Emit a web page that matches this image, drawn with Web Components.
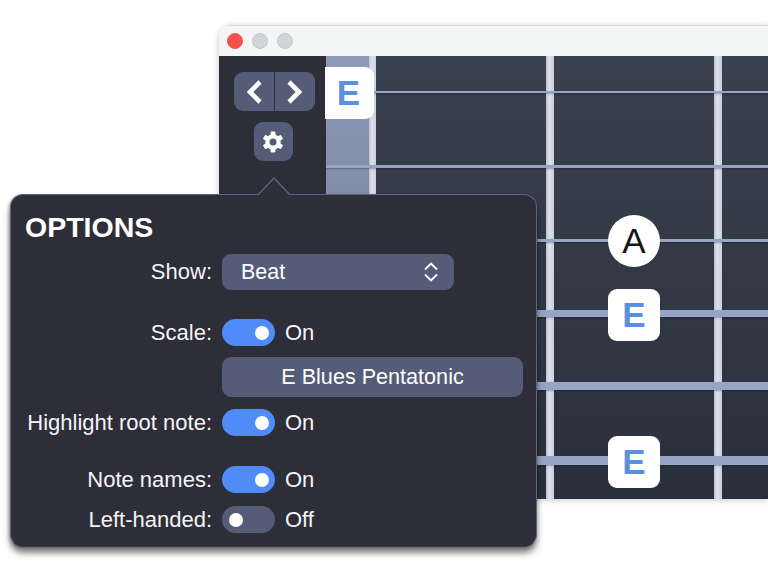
<!DOCTYPE html>
<html>
<head>
<meta charset="utf-8">
<style>
	html, body {
		margin: 0;
		background: #fff;
		overflow: hidden;
	}
	body {
		width: 768px;
		height: 569px;
		position: relative;
		font-family: "Liberation Sans", Arial, sans-serif;
	}
	#stage {
		padding-top: 25px;
	}
</style>
</head>
<body>
	<div id="stage">
	<fret-window>
		<side-bar slot="side"></side-bar>
		<fret-board slot="board">
			<fret-note kind="nut" style="--x: -1px; --y: 11px">E</fret-note>
			<fret-note kind="circle" style="--x: 282px; --y: 158.5px">A</fret-note>
			<fret-note kind="tile" style="--x: 282px; --y: 232.5px">E</fret-note>
			<fret-note kind="tile" style="--x: 282px; --y: 379.5px">E</fret-note>
		</fret-board>
	</fret-window>
	</div>

	<options-popover>
		<option-row label="Show:" style="margin-top: 10px">
			<option-select>Beat</option-select>
		</option-row>
		<option-row label="Scale:" style="margin-top: 29px">
			<option-toggle on></option-toggle>
		</option-row>
		<option-row style="margin-top: 11px">
			<option-button>E Blues Pentatonic</option-button>
		</option-row>
		<option-row label="Highlight root note:" style="margin-top: 12px">
			<option-toggle on></option-toggle>
		</option-row>
		<option-row label="Note names:" style="margin-top: 30px">
			<option-toggle on></option-toggle>
		</option-row>
		<option-row label="Left-handed:" style="margin-top: 13px">
			<option-toggle></option-toggle>
		</option-row>
	</options-popover>

<script>
class FretWindow extends HTMLElement {
	constructor() {
		super();
		this.attachShadow({ mode: "open" });
		this.shadowRoot.innerHTML = `
      <style>
        :host {
          display: block;
          width: 549px;
          height: 474px;
          margin-left: 219px;
          border-radius: 12px 0 0 0;
          box-shadow: 0 1px 6px rgba(0, 0, 0, .22);
          overflow: hidden;
        }
        #bar {
          height: 31px;
          box-sizing: border-box;
          background: #f4f5f5;
          border-top: 1px solid #d9d9d9;
          display: flex;
          align-items: center;
          gap: 9px;
          padding-left: 8px;
        }
        #bar i {
          width: 16px;
          height: 16px;
          border-radius: 50%;
          background: #d3d4d7;
          border: 1px solid #c5c6c9;
          box-sizing: border-box;
        }
        #bar i:first-child {
          background: #f9504c;
          border-color: #f2524e;
        }
        #body {
          display: flex;
          height: 443px;
        }
      </style>
      <div id="bar"><i></i><i></i><i></i></div>
      <div id="body">
        <slot name="side"></slot>
        <slot name="board"></slot>
      </div>
    `;
	}
}

class SideBar extends HTMLElement {
	constructor() {
		super();
		this.attachShadow({ mode: "open" });
		this.shadowRoot.innerHTML = `
      <style>
        :host {
          display: flex;
          flex-direction: column;
          align-items: center;
          width: 107px;
          flex: none;
          box-sizing: border-box;
          padding: 16px 0 0 1px;
          background: #2e2e39;
        }
        #nav {
          display: flex;
          gap: 1px;
          margin-left: 2px;
        }
        .btn {
          display: flex;
          align-items: center;
          justify-content: center;
          background: #545c77;
          height: 39px;
        }
        #nav .btn {
          width: 40px;
        }
        #nav .btn:first-child {
          border-radius: 9px 0 0 9px;
        }
        #nav .btn:last-child {
          border-radius: 0 9px 9px 0;
        }
        #gear {
          width: 39px;
          margin-top: 11px;
          border-radius: 9px;
        }
      </style>
      <div id="nav">
        <div class="btn">
          <svg width="22" height="32" viewBox="0 0 22 32"><path d="M17 6 L7 16 L17 26" fill="none" stroke="#fff" stroke-width="4.6"/></svg>
        </div>
        <div class="btn">
          <svg width="22" height="32" viewBox="0 0 22 32"><path d="M5 6 L15 16 L5 26" fill="none" stroke="#fff" stroke-width="4.6"/></svg>
        </div>
      </div>
      <div class="btn" id="gear">
        <svg width="22" height="22" viewBox="-11 -11 22 22">
          <circle r="5.6" fill="none" stroke="#fff" stroke-width="4.2"/>
          <g fill="#fff">
            <rect x="-2.4" y="-10.4" width="4.8" height="5" rx=".8"/>
            <rect x="-2.4" y="-10.4" width="4.8" height="5" rx=".8" transform="rotate(60)"/>
            <rect x="-2.4" y="-10.4" width="4.8" height="5" rx=".8" transform="rotate(120)"/>
            <rect x="-2.4" y="-10.4" width="4.8" height="5" rx=".8" transform="rotate(180)"/>
            <rect x="-2.4" y="-10.4" width="4.8" height="5" rx=".8" transform="rotate(240)"/>
            <rect x="-2.4" y="-10.4" width="4.8" height="5" rx=".8" transform="rotate(300)"/>
          </g>
        </svg>
      </div>
    `;
	}
}

class FretBoard extends HTMLElement {
	constructor() {
		super();
		this.attachShadow({ mode: "open" });
		// y and thickness of every string, measured from the top of the board
		const strings = [[36, 2], [110, 3], [184, 3], [257, 7], [330, 8], [404, 9]];
		const frets = [[220, 8], [388, 8]];
		const stringHtml = strings.map(([y, h]) => `<b class="string" style="top:${y - h / 2}px;height:${h}px"></b>`).join("");
		const fretHtml = frets.map(([x, w]) => `<b class="fret" style="left:${x}px;width:${w}px"></b>`).join("");
		this.shadowRoot.innerHTML = `
      <style>
        :host {
          display: block;
          position: relative;
          width: 442px;
          height: 443px;
          flex: none;
        }
        #nut {
          position: absolute;
          inset: 0 auto 0 0;
          width: 43px;
          background: linear-gradient(#8f9ab8, #66718c);
        }
        #wood {
          position: absolute;
          inset: 0 0 0 50px;
          background: linear-gradient(#3a414f, #2a303b);
        }
        .fret, #nutfret {
          position: absolute;
          top: 0;
          bottom: 0;
          background: linear-gradient(90deg, #b9c0d0, #dde1ec 40%, #c9cedb);
        }
        #nutfret {
          left: 43px;
          width: 7px;
        }
        .string {
          position: absolute;
          left: 0;
          right: 0;
          background: #96a5c5;
          box-shadow: 0 1px 2px rgba(0, 0, 0, .3);
        }
        ::slotted(fret-note) {
          position: absolute;
          left: var(--x);
          top: var(--y);
        }
      </style>
      <div id="nut"></div>
      <div id="wood"></div>
      <div id="nutfret"></div>
      ${fretHtml}
      ${stringHtml}
      <slot></slot>
    `;
	}
}

class FretNote extends HTMLElement {
	constructor() {
		super();
		this.attachShadow({ mode: "open" });
		this.shadowRoot.innerHTML = `
      <style>
        :host {
          display: flex;
          align-items: center;
          justify-content: center;
          box-sizing: border-box;
          width: 52px;
          height: 52px;
          background: #fff;
          border-radius: 9px;
          color: #5b90de;
          font: bold 35px "Liberation Sans", Arial, sans-serif;
          line-height: 52px;
        }
        :host([kind="circle"]) {
          border-radius: 50%;
          color: #15151a;
          font-weight: normal;
        }
        :host([kind="nut"]) {
          width: 49px;
          padding-right: 2px;
          border-radius: 0 9px 9px 0;
        }
      </style>
      <slot></slot>
    `;
	}
}

class OptionsPopover extends HTMLElement {
	constructor() {
		super();
		this.attachShadow({ mode: "open" });
		this.shadowRoot.innerHTML = `
      <style>
        :host {
          display: block;
          position: absolute;
          left: 10px;
          top: 194px;
          width: 527px;
          height: 353px;
          box-sizing: border-box;
          padding: 15px 14px 0 14px;
          background: #2e2e39;
          border: 1px solid #5f6580;
          border-bottom-color: #3a3a46;
          border-radius: 13px;
          box-shadow: 0 6px 6px rgba(0, 0, 0, .5), -1px 1px 3px rgba(0, 0, 0, .25);
          color: #fff;
          font-family: "Liberation Sans", Arial, sans-serif;
        }
        #arrow {
          position: absolute;
          left: 246px;
          top: -18px;
        }
        h2 {
          margin: 0;
          font-size: 28.5px;
          line-height: 34px;
          font-weight: bold;
        }
      </style>
      <svg id="arrow" width="36" height="19" viewBox="0 0 36 19">
        <path d="M0 18.5 L1 18.5 L17 1 L33 18.5 L36 18.5 L36 19 L0 19Z" fill="#2e2e39"/>
        <path d="M1 18 L17 1 L33 18" fill="none" stroke="#5f6580" stroke-width="1.2"/>
      </svg>
      <h2>OPTIONS</h2>
      <slot></slot>
    `;
	}
}

class OptionRow extends HTMLElement {
	constructor() {
		super();
		this.attachShadow({ mode: "open" });
		this.shadowRoot.innerHTML = `
      <style>
        :host {
          display: grid;
          grid-template-columns: 187px 1fr;
          column-gap: 10px;
          align-items: center;
          font-size: 22px;
        }
        #label {
          text-align: right;
          color: #f4f4f6;
          white-space: nowrap;
        }
      </style>
      <div id="label"></div>
      <div><slot></slot></div>
    `;
	}

	connectedCallback() {
		this.shadowRoot.querySelector("#label").textContent = this.getAttribute("label") || "";
	}
}

class OptionToggle extends HTMLElement {
	constructor() {
		super();
		this.attachShadow({ mode: "open" });
		this.shadowRoot.innerHTML = `
      <style>
        :host {
          display: flex;
          align-items: center;
          gap: 10px;
          height: 27px;
          color: #f4f4f6;
        }
        #track {
          display: flex;
          align-items: center;
          box-sizing: border-box;
          width: 53px;
          height: 27px;
          padding: 0 6px 0 7px;
          border-radius: 14px;
          background: #545c77;
        }
        #track i {
          width: 14px;
          height: 14px;
          border-radius: 50%;
          background: #fff;
        }
        :host([on]) #track {
          background: #4f8cf7;
          justify-content: flex-end;
        }
      </style>
      <div id="track"><i></i></div>
      <span id="state"></span>
    `;
	}

	connectedCallback() {
		this.shadowRoot.querySelector("#state").textContent = this.hasAttribute("on") ? "On" : "Off";
	}
}

class OptionSelect extends HTMLElement {
	constructor() {
		super();
		this.attachShadow({ mode: "open" });
		this.shadowRoot.innerHTML = `
      <style>
        :host {
          display: flex;
          align-items: center;
          justify-content: space-between;
          box-sizing: border-box;
          width: 232px;
          height: 36px;
          padding: 0 15px 0 19px;
          background: #545c77;
          border-radius: 9px;
          color: #fff;
          font-size: 21.5px;
        }
      </style>
      <slot></slot>
      <svg width="16" height="22" viewBox="0 0 16 22">
        <path d="M2 8.5 L8 2.5 L14 8.5 M2 13.5 L8 19.5 L14 13.5" fill="none" stroke="#fff" stroke-width="1.9"/>
      </svg>
    `;
	}
}

class OptionButton extends HTMLElement {
	constructor() {
		super();
		this.attachShadow({ mode: "open" });
		this.shadowRoot.innerHTML = `
      <style>
        :host {
          display: flex;
          align-items: center;
          justify-content: center;
          width: 301px;
          height: 40px;
          background: #545c77;
          border-radius: 9px;
          color: #fff;
          font-size: 21.6px;
        }
      </style>
      <slot></slot>
    `;
	}
}

customElements.define("fret-window", FretWindow);
customElements.define("side-bar", SideBar);
customElements.define("fret-board", FretBoard);
customElements.define("fret-note", FretNote);
customElements.define("options-popover", OptionsPopover);
customElements.define("option-row", OptionRow);
customElements.define("option-toggle", OptionToggle);
customElements.define("option-select", OptionSelect);
customElements.define("option-button", OptionButton);
</script>
</body>
</html>
